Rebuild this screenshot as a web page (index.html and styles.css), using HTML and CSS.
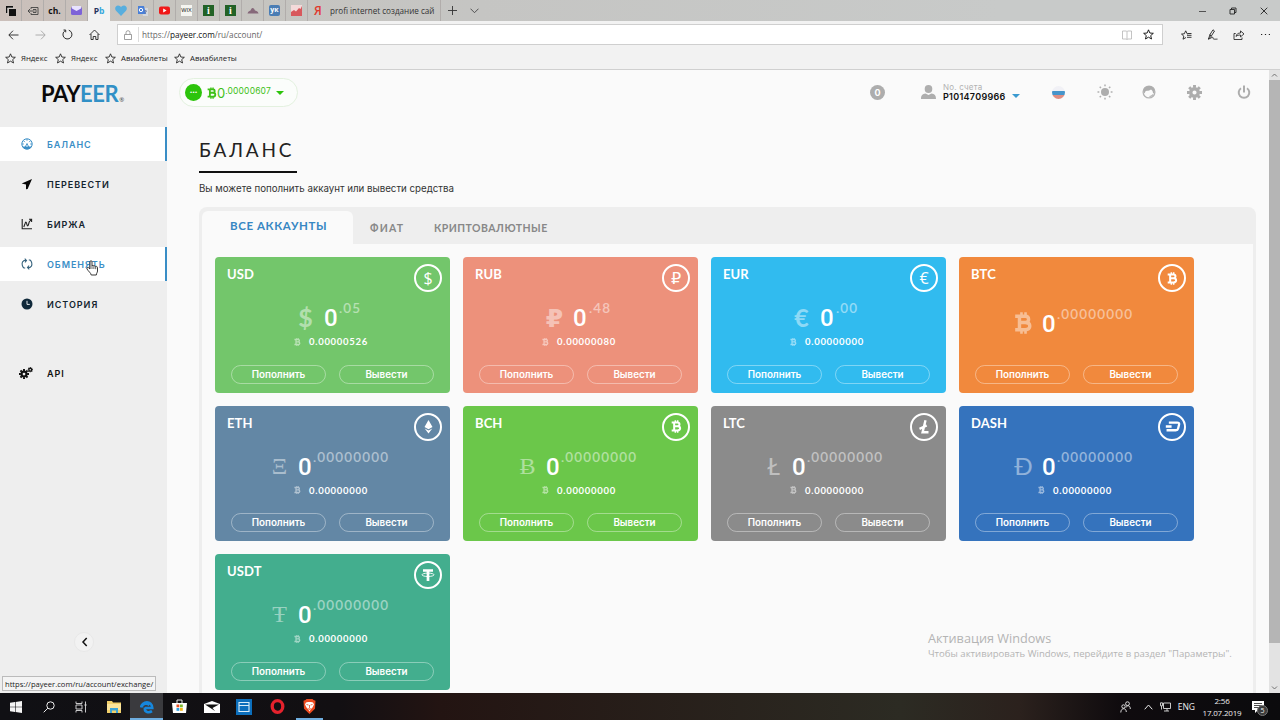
FILE: index.html
```html
<!DOCTYPE html>
<html lang="ru">
<head>
<meta charset="utf-8">
<title>Payeer</title>
<link rel="stylesheet" href="styles.css">
</head>
<body>
<svg class="defs" width="0" height="0" aria-hidden="true">
  <symbol id="star" viewBox="0 0 12 12"><path d="M6 .9l1.500 3.500 3.800.3-2.900 2.500.9 3.700L6 8.900l-3.300 2 .9-3.700L.7 4.700l3.800-.3z" fill="none" stroke="currentColor" stroke-width=".95"/></symbol>
  <symbol id="btc" viewBox="0 0 16 18"><path d="M1 3.300h8.400c2 0 2.900 1 2.900 2.500S11.300 8.600 9.400 8.600H5M9.400 8.600c2.500 0 3.900 1.100 3.900 3s-1.400 3.100-3.900 3.100H1M4.600 3v12" fill="none" stroke="currentColor" stroke-width="2.900"/><path d="M6.300 0v3M9.700 0v3M6.300 15v3M9.700 15v3" stroke="currentColor" stroke-width="2.200"/></symbol>
  <symbol id="gear" viewBox="0 0 16 16"><circle cx="8" cy="8" r="4" fill="none" stroke="currentColor" stroke-width="3.600"/><path d="M8 0v3M8 13v3M0 8h3M13 8h3M2.340 2.340l2.100 2.100M11.500 11.500l2.160 2.160M2.340 13.660l2.100-2.100M11.500 4.500l2.160-2.160" stroke="currentColor" stroke-width="3.100"/></symbol>
</svg>

<div class="screen">
  <div class="tabstrip">
    <div class="tab"><svg width="12" height="12" viewBox="0 0 12 12"><path d="M1 1h7v2H3v5H1z" fill="#111"/><path d="M4 4h7v7H4z" fill="#111"/><path d="M2.500 8.500V3h6" stroke="#ddd" fill="none" stroke-width=".7"/></svg></div>
    <div class="tab"><svg width="12" height="12" viewBox="0 0 12 12"><path d="M4 4V2.500h7v7H4V8M7.500 6H1M3 4L1 6l2 2M6 4.500h3v3H6" fill="none" stroke="#444" stroke-width=".9"/></svg></div>
    <div class="tab tab-ch">ch.</div>
    <div class="tab"><svg width="11" height="9" viewBox="0 0 11 9"><rect y="1" width="11" height="8" rx="1.500" fill="#7d63d8"/><path d="M1 0h9v2.500L5.500 5 1 2.500z" fill="#e8e2ff"/></svg></div>
    <div class="tab tab-active"><b class="pb-p">P</b><b class="pb-b">b</b></div>
    <div class="tab"><svg width="12" height="11" viewBox="0 0 12 11"><path d="M6 11L1 5.800C-.8 3.500.6.500 3 .5 4.500.5 5.500 1.300 6 2.300 6.500 1.300 7.500.5 9 .5c2.400 0 3.800 3 2 5.300z" fill="#58aede"/></svg></div>
    <div class="tab"><svg width="12" height="12" viewBox="0 0 12 12"><path d="M4 3h7v8H6z" fill="#d5d8dd"/><path d="M1 1h6l2 8H1z" fill="#4a80d8"/><circle cx="4" cy="5" r="1.700" fill="none" stroke="#fff"/><path d="M7 6h3M8.500 5v1M7.500 9l2-3" stroke="#6779a3" stroke-width=".7"/></svg></div>
    <div class="tab"><svg width="11" height="9" viewBox="0 0 11 9"><rect y=".5" width="11" height="8" rx="2" fill="#f01818"/><path d="M4.200 2.400v4.200L7.600 4.500z" fill="#fff"/></svg></div>
    <div class="tab"><span class="fav-wix">WIX</span></div>
    <div class="tab"><span class="fav-i">i</span></div>
    <div class="tab"><span class="fav-i">i</span></div>
    <div class="tab"><svg width="12" height="8" viewBox="0 0 12 8"><path d="M.5 6.500C1 4 3 4 3.500 3.500 4 2 5 .5 6 1s1.500 1.500 2 2.500c1 .5 3 .5 3.500 3z" fill="#86697a"/></svg></div>
    <div class="tab"><span class="fav-vk">ук</span></div>
    <div class="tab"><svg width="11" height="11" viewBox="0 0 11 11"><rect width="11" height="11" fill="#f3dada"/><path d="M0 7l3-2 2 1.500L8 3l1.500 1L11 1v10H0z" fill="#d8585c"/></svg></div>
    <div class="tab tab-wide"><span class="fav-ya">Я</span><span class="tab-title">profi internet создание сай</span></div>
    <svg class="tab-plus" width="9" height="9" viewBox="0 0 9 9"><path d="M4.500 0v9M0 4.500h9" stroke="#333" stroke-width=".9"/></svg>
    <svg class="tab-chev" width="9" height="6" viewBox="0 0 9 6"><path d="M.5.700l4 4 4-4" fill="none" stroke="#444" stroke-width=".9"/></svg>
    <div class="winbtns">
      <svg width="7" height="8" viewBox="0 0 7 8"><path d="M0 4.500h7" stroke="#333" stroke-width=".8"/></svg>
      <svg width="8" height="8" viewBox="0 0 8 8"><path d="M1 2.500h4.500V7H1zM2.500 2.500V1H7v4.500H5.500" fill="none" stroke="#222" stroke-width=".9"/></svg>
      <svg width="8" height="8" viewBox="0 0 8 8"><path d="M.7.700l6.600 6.600M7.300.700L.7 7.300" stroke="#222" stroke-width=".9"/></svg>
    </div>
  </div>

  <div class="toolbar">
    <div class="navbtns">
      <svg width="11" height="10" viewBox="0 0 11 10"><path d="M10.500 5H1M5 .7L.8 5 5 9.300" fill="none" stroke="#222" stroke-width=".9"/></svg>
      <svg width="11" height="10" viewBox="0 0 11 10"><path d="M.5 5H10M6 .7L10.200 5 6 9.300" fill="none" stroke="#a5a5a5" stroke-width=".9"/></svg>
      <svg width="11" height="11" viewBox="0 0 11 11"><path d="M3 1.700A4.500 4.500 0 1 0 6.800 1.200M1.500 1h2.200v2.300" fill="none" stroke="#222" stroke-width=".95"/></svg>
      <svg width="11" height="11" viewBox="0 0 11 11"><path d="M.5 6l5-5 5 5M2 5v5.500h2.200V7.500h2.600v3H9V5" fill="none" stroke="#222" stroke-width=".9"/></svg>
    </div>
    <div class="address">
      <svg class="lock" width="8" height="10" viewBox="0 0 8 10"><path d="M.5 4.500h7v5h-7zM2 4.500V2.700a2 2 0 0 1 4 0v1.800" fill="none" stroke="#888" stroke-width=".8"/></svg>
      <span class="url">https://<b>payeer.com</b>/ru/account/</span>
      <svg class="book" width="10" height="10" viewBox="0 0 10 10"><path d="M.5 1h4L5 1.500l.5-.5h4v8h-4L5 9.500 4.500 9h-4zM5 1.500v8" fill="none" stroke="#aaa" stroke-width=".7"/></svg>
      <svg class="addr-star" width="11" height="11"><use href="#star"/></svg>
    </div>
    <div class="tools">
      <svg width="11" height="10" viewBox="0 0 11 10"><path d="M7 4L6.200 3.800 4.700.8 3.300 3.800.5 4.100l2.300 2-.8 3.100 3-1.700M6 5.300h4.500M6.700 3.500h3.800M6 7.300h4.500" fill="none" stroke="#222" stroke-width=".9"/></svg>
      <svg width="11" height="11" viewBox="0 0 11 11"><path d="M1.500 10L3 5.500 6 .8 7.500 2 4 7.500zM3 5.500L4 7.500M1 10.300c3-1 5-3 5-1.500s1 1.500 4.500 1.300" fill="none" stroke="#222" stroke-width=".9"/></svg>
      <svg width="12" height="10" viewBox="0 0 12 10"><path d="M2.700 3.500H1v6h8V7.500M3 6.500c.5-2.500 2-3.500 4.500-3.500V.9l3.500 3-3.500 3V5C5.500 5 4 5.300 3 6.500z" fill="none" stroke="#222" stroke-width=".85"/></svg>
      <svg width="11" height="3" viewBox="0 0 11 3"><path d="M1 1.500h1.200M4.900 1.500h1.200M8.800 1.500H10" stroke="#222" stroke-width="1.200"/></svg>
    </div>
  </div>

  <div class="favbar">
    <span class="fav"><svg width="11" height="11"><use href="#star"/></svg>Яндекс</span>
    <span class="fav"><svg width="11" height="11"><use href="#star"/></svg>Яндекс</span>
    <span class="fav fav-long"><svg width="11" height="11"><use href="#star"/></svg>Авиабилеты</span>
    <span class="fav"><svg width="11" height="11"><use href="#star"/></svg>Авиабилеты</span>
  </div>

  <div class="page">
    <aside class="sidebar">
      <div class="logo"><span>PAY</span><span class="logo-blue">EER</span><i>®</i></div>
      <nav class="menu">
        <a class="item on"><svg width="12" height="12" viewBox="0 0 12 12"><circle cx="6" cy="6" r="5.200" fill="none" stroke="currentColor" stroke-width="1"/><path d="M1.300 8.500h9.400C9.500 12 2.500 12 1.300 8.500z" fill="currentColor"/><path d="M6 1v1.700M1 6h1.800M9.200 6H11M2.500 2.700l1.300 1.400M9.500 2.700L8.200 4.100M4.300 9L6 5.500 7.700 9" stroke="currentColor" fill="none" stroke-width=".9"/></svg>БАЛАНС</a>
        <a class="item"><svg width="12" height="12" viewBox="0 0 12 12"><path d="M11 1L.7 5.500 5 6.500v4.700L6.600 11z" fill="#050505"/></svg>ПЕРЕВЕСТИ</a>
        <a class="item"><svg width="12" height="12" viewBox="0 0 12 12"><path d="M1.200 1v9.800H11M2.800 9l1.400-3.800c.3-1.500 1-1.500 1.300 0l.6 2c.3 1 .9 1 1.200 0L8.200 4l2-2.500M8 1.300h2.600V4" fill="none" stroke="#222" stroke-width="1.100"/></svg>БИРЖА</a>
        <a class="item on hover"><svg width="12" height="12" viewBox="0 0 12 12"><path d="M4.200 10H3C1.200 8.800.6 5.500 1.600 3.800L3 2.500h2.200M3.700.7L5.500 2.500 3.900 4.300M7.800 2H9c1.800 1.200 2.400 4.500 1.400 6.200L9 9.500H6.800M8.300 11.300L6.500 9.500l1.600-1.800" fill="none" stroke="#35627d" stroke-width="1.100"/></svg>ОБМЕНЯТЬ</a>
        <a class="item"><svg width="12" height="12" viewBox="0 0 12 12"><circle cx="6" cy="6" r="5.500" fill="#10293a"/><path d="M6 2.800V6.400h2.800" stroke="#dfe5e8" stroke-width="1" fill="none"/></svg>ИСТОРИЯ</a>
        <a class="item api"><svg width="14" height="12" viewBox="0 0 14 12"><svg x="0" y="2" width="10" height="10" viewBox="0 0 16 16"><use href="#gear"/></svg><svg x="8.500" y="0" width="5.500" height="5.500" viewBox="0 0 16 16"><use href="#gear"/></svg></svg>API</a>
      </nav>
      <div class="collapse"><svg width="7" height="10" viewBox="0 0 7 10"><path d="M5.700 1L2 5l3.700 4" fill="none" stroke="#111" stroke-width="1.500"/></svg></div>
    </aside>

    <main class="main">
      <header class="top">
        <div class="pill"><span class="dots">···</span><svg class="pill-btc" width="10" height="12"><use href="#btc"/></svg><span class="pill-zero">0</span><span class="pill-dec">.00000607</span><i class="tri tri-green"></i></div>
        <div class="count">0</div>
        <div class="account">
          <svg width="15" height="14" viewBox="0 0 15 14"><ellipse cx="7.500" cy="4" rx="3.800" ry="4" fill="#aeaeae"/><path d="M0 14c0-4 1.500-5 4.500-5.500L7.500 10l3-1.500C13.500 9 15 10 15 14z" fill="#aeaeae"/></svg>
          <div class="acc-text"><span class="acc-label">No. счета</span><span class="acc-num">P1014709966</span></div>
          <i class="tri tri-blue"></i>
        </div>
        <div class="flag"></div>
        <svg class="ic-sun" width="16" height="16" viewBox="0 0 16 16"><circle cx="8" cy="8" r="4" fill="#adadad"/><path d="M8 .5v1.800M8 13.700v1.800M.5 8h1.800M13.700 8h1.800M2.700 2.700L4 4M12 12l1.300 1.300M2.700 13.300L4 12M12 4l1.300-1.300" stroke="#b0b0b0" stroke-width="1.500"/></svg>
        <svg class="ic-sup" width="14" height="14" viewBox="0 0 14 14"><circle cx="7" cy="7" r="5.900" fill="none" stroke="#b4b4b4" stroke-width="1.300"/><path d="M1.500 7C1.500 3 4 1 7 1s5.500 2 5.500 5.500v2L11 8.300C11 6.500 10.300 5.500 9 4.500 7.500 6 5 5.500 3.500 6.200L2.500 8.500z" fill="#adadad"/><path d="M11 9.500c-.8 1.500-2 2-3.500 2" stroke="#adadad" fill="none" stroke-width="1.200"/></svg>
        <svg class="ic-gear" width="15" height="15"><use href="#gear"/></svg>
        <svg class="ic-power" width="14" height="15" viewBox="0 0 14 15"><path d="M4 3.200a5.300 5.300 0 1 0 6 0M7 .5v7" fill="none" stroke="#adadad" stroke-width="2"/></svg>
      </header>

      <h1 class="title">БАЛАНС</h1>
      <p class="lead">Вы можете пополнить аккаунт или вывести средства</p>

      <section class="panel">
        <div class="ptabs">
          <span class="ptab ptab-on">ВСЕ АККАУНТЫ</span>
          <span class="ptab ptab-fiat">ФИАТ</span>
          <span class="ptab ptab-crypto">КРИПТОВАЛЮТНЫЕ</span>
        </div>
        <div class="cards">
          <article class="card usd">
            <div class="head"><h2>USD</h2><span class="badge">$</span></div>
            <div class="amount short"><span class="sign bold">$</span><span class="int">0</span><span class="dec">.05</span></div>
            <div class="sub"><svg width="7" height="8"><use href="#btc"/></svg>0.00000526</div>
            <div class="btns"><a>Пополнить</a><a>Вывести</a></div>
          </article>
          <article class="card rub">
            <div class="head"><h2>RUB</h2><span class="badge">₽</span></div>
            <div class="amount short"><span class="sign bold">₽</span><span class="int">0</span><span class="dec">.48</span></div>
            <div class="sub"><svg width="7" height="8"><use href="#btc"/></svg>0.00000080</div>
            <div class="btns"><a>Пополнить</a><a>Вывести</a></div>
          </article>
          <article class="card eur">
            <div class="head"><h2>EUR</h2><span class="badge">€</span></div>
            <div class="amount short"><span class="sign bold">€</span><span class="int">0</span><span class="dec">.00</span></div>
            <div class="sub"><svg width="7" height="8"><use href="#btc"/></svg>0.00000000</div>
            <div class="btns"><a>Пополнить</a><a>Вывести</a></div>
          </article>
          <article class="card btc">
            <div class="head"><h2>BTC</h2><span class="badge"><svg width="11" height="13"><use href="#btc"/></svg></span></div>
            <div class="amount low"><span class="sign"><svg width="19" height="22"><use href="#btc"/></svg></span><span class="int">0</span><span class="dec">.00000000</span></div>
            <div class="btns"><a>Пополнить</a><a>Вывести</a></div>
          </article>
          <article class="card eth">
            <div class="head"><h2>ETH</h2><span class="badge"><svg width="9" height="14" viewBox="0 0 9 14"><path d="M4.500 0l4 7-4 2.300L.5 7zM.7 8.400l3.800 2.200 3.800-2.200-3.800 5.200z" fill="#fff"/></svg></span></div>
            <div class="amount"><span class="sign serif">Ξ</span><span class="int">0</span><span class="dec">.00000000</span></div>
            <div class="sub"><svg width="7" height="8"><use href="#btc"/></svg>0.00000000</div>
            <div class="btns"><a>Пополнить</a><a>Вывести</a></div>
          </article>
          <article class="card bch">
            <div class="head"><h2>BCH</h2><span class="badge"><svg width="11" height="13"><use href="#btc"/></svg></span></div>
            <div class="amount"><span class="sign serif">Ƀ</span><span class="int">0</span><span class="dec">.00000000</span></div>
            <div class="sub"><svg width="7" height="8"><use href="#btc"/></svg>0.00000000</div>
            <div class="btns"><a>Пополнить</a><a>Вывести</a></div>
          </article>
          <article class="card ltc">
            <div class="head"><h2>LTC</h2><span class="badge"><svg width="12" height="14" viewBox="0 0 12 14"><path d="M7.500.3L4.600 12.300H10.500M1.500 8.800l7.200-3.300" fill="none" stroke="#fff" stroke-width="2.400"/></svg></span></div>
            <div class="amount"><span class="sign">Ł</span><span class="int">0</span><span class="dec">.00000000</span></div>
            <div class="sub"><svg width="7" height="8"><use href="#btc"/></svg>0.00000000</div>
            <div class="btns"><a>Пополнить</a><a>Вывести</a></div>
          </article>
          <article class="card dash">
            <div class="head"><h2>DASH</h2><span class="badge"><svg width="17" height="11" viewBox="0 0 18 12"><path d="M5 1.700h9c1.800 0 2.600.6 2.200 2.200l-1.100 4.300c-.3 1.300-1 1.900-2.500 1.900H2.500M1.700 6H8" fill="none" stroke="#fff" stroke-width="2.500"/></svg></span></div>
            <div class="amount"><span class="sign">Đ</span><span class="int">0</span><span class="dec">.00000000</span></div>
            <div class="sub"><svg width="7" height="8"><use href="#btc"/></svg>0.00000000</div>
            <div class="btns"><a>Пополнить</a><a>Вывести</a></div>
          </article>
          <article class="card usdt">
            <div class="head"><h2>USDT</h2><span class="badge"><svg width="14" height="12" viewBox="0 0 14 12"><path d="M2 1.500h10M7 1.500V12" stroke="#fff" stroke-width="2.700"/><ellipse cx="7" cy="5.800" rx="6" ry="1.700" fill="none" stroke="#fff" stroke-width=".9"/></svg></span></div>
            <div class="amount"><span class="sign serif">Ŧ</span><span class="int">0</span><span class="dec">.00000000</span></div>
            <div class="sub"><svg width="7" height="8"><use href="#btc"/></svg>0.00000000</div>
            <div class="btns"><a>Пополнить</a><a>Вывести</a></div>
          </article>
        </div>
      </section>
    </main>

    <div class="scrollbar">
      <svg width="7" height="10" viewBox="0 0 7 10"><path d="M1 6.500L3.500 4 6 6.500" fill="none" stroke="#666" stroke-width=".9"/></svg>
      <div class="thumb"></div>
      <svg width="7" height="10" viewBox="0 0 7 10"><path d="M1 3.500L3.500 6 6 3.500" fill="none" stroke="#666" stroke-width=".9"/></svg>
    </div>
  </div>

  <div class="taskbar">
    <div class="apps">
      <span><svg width="12" height="12" viewBox="0 0 12 12"><path d="M0 1.700L5 1v4.700H0zM5.600.9L12 0v5.700H5.600zM0 6.300h5V11l-5-.7zM5.600 6.300H12V12l-6.400-.9z" fill="#f5f5f5"/></svg></span>
      <span><svg width="12" height="12" viewBox="0 0 12 12"><circle cx="7.500" cy="4.500" r="3.700" fill="none" stroke="#eee"/><path d="M4.800 7.200L.7 11.300" stroke="#eee"/></svg></span>
      <span><svg width="12" height="12" viewBox="0 0 12 12"><path d="M1 .5v2h6v-2M1 11.500v-2h6v2M1 4h6v4H1zM10.500.5v11M9.300 4h2.400" fill="none" stroke="#ddd" stroke-width=".9"/></svg></span>
      <span><svg width="14" height="12" viewBox="0 0 14 12"><path d="M0 0h5l1 1.500h8V12H0z" fill="#f1cf6a"/><path d="M0 3h14v6H0z" fill="#fbe49a"/><path d="M3 7h8v5H9V9.500H5V12H3z" fill="#3da5d8"/></svg></span>
      <span class="running current"><svg width="14" height="14" viewBox="0 0 14 14"><path d="M1 7.500C2 1 12 .2 12.300 8H5M1.500 7C3 3.500 7 2.500 9.500 5M5 7.500c-1 5 4 5.500 7 3.700" fill="none" stroke="#1687dd" stroke-width="2.600"/></svg></span>
      <span><svg width="15" height="15" viewBox="0 0 15 15"><path d="M5 4.500V1h5v3.500" fill="none" stroke="#eee"/><path d="M0 4h15l-1 10H1z" fill="#fff"/><path d="M4.500 5.500h2.800v2.800H4.500z" fill="#e85025"/><path d="M8 5.500h2.800v2.800H8z" fill="#7cb82f"/><path d="M4.500 9h2.800v2.800H4.500z" fill="#2b9fe0"/><path d="M8 9h2.800v2.800H8z" fill="#f4b619"/></svg></span>
      <span><svg width="16" height="12" viewBox="0 0 16 12"><path d="M0 3l8-3 8 3v9H0z" fill="#fff"/><path d="M1 3.500h14L8.500 7 11 10z" fill="#111"/></svg></span>
      <span><svg width="16" height="16" viewBox="0 0 16 16"><path d="M0 0h16v16H0z" fill="#0c6fbc"/><path d="M3 3.500h10v9H3zM3 6.500h10" fill="none" stroke="#d9edf8" stroke-width="1.100"/></svg></span>
      <span><svg width="15" height="15" viewBox="0 0 15 15"><ellipse cx="7.500" cy="7.500" rx="5.300" ry="5.800" fill="none" stroke="#e5222d" stroke-width="3.300"/></svg></span>
      <span class="running brave"><svg width="13" height="15" viewBox="0 0 13 15"><path d="M2.500 1l1-1h6l1 1 2 .8-.5 8L6.500 15 1 9.800l-.5-8z" fill="#ed4b20"/><path d="M3 3.500l2-.5h3l2 .5 1 2-1.500 3L8 10l-1.500 2.500L5 10 3.500 8.500 2 5.500z" fill="#fff"/><path d="M3.500 5.500L5.500 6M9.500 5.500L7.500 6M6.500 6v3.500M5 9.500l1.500 1 1.500-1" stroke="#ed4b20" stroke-width=".8" fill="none"/></svg></span>
    </div>
    <div class="tray">
      <svg class="people" width="11" height="12" viewBox="0 0 11 12"><circle cx="3.500" cy="5.500" r="1.700" fill="none" stroke="#eee" stroke-width=".9"/><circle cx="7.500" cy="2.700" r="1.900" fill="none" stroke="#eee" stroke-width=".9"/><path d="M.8 11.500c0-5 5.500-5 5.500-.5M6 6.500c1-2.500 4.300-2.500 4.300 1.500" fill="none" stroke="#eee" stroke-width=".9"/></svg>
      <svg class="up" width="9" height="6" viewBox="0 0 9 6"><path d="M.7 5.300L4.500 1l3.800 4.300" fill="none" stroke="#eee"/></svg>
      <svg class="net" width="11" height="10" viewBox="0 0 11 10"><path d="M3.500 1h7v5.500h-7zM4 9h5M7 6.500V9M.5.800h2v3h-2zM1.500 4v3.500" fill="none" stroke="#ddd" stroke-width=".9"/></svg>
      <span class="lang">ENG</span>
      <span class="clock">2:56<br>17.07.2019</span>
      <span class="notes"><svg width="12" height="12" viewBox="0 0 12 12"><path d="M0 0h12v9H6l-3 3V9H0z" fill="#fff"/><path d="M2 2.500h8M2 4.500h8M2 6.500h8" stroke="#222" stroke-width=".8"/></svg><i class="num">5</i></span>
    </div>
  </div>

  <div class="watermark"><b>Активация Windows</b><span>Чтобы активировать Windows, перейдите в раздел "Параметры".</span></div>
  <div class="status">https://payeer.com/ru/account/exchange/</div>
  <svg class="cursor" width="13" height="16" viewBox="0 0 13 16"><path d="M4 9V1.800c0-1.500 2-1.500 2 0V6c.3-1 1.800-.8 1.900.3.400-.8 1.700-.6 1.800.5.500-.7 1.800-.4 1.800.8V11c0 1.500-1 2-1.200 4H5.200C5 13 2.500 11.500 1 9c-.7-1.400 1-2 1.700-1.200z" fill="#fff" stroke="#222" stroke-width=".9"/><path d="M6 6v3M7.900 6.500V9M9.700 7v2.200" stroke="#222" stroke-width=".7"/></svg>
</div>
</body>
</html>
```
FILE: styles.css
```css
* { box-sizing: border-box; }
body { margin: 0; background: #fafafa; font-family: "Open Sans", "Noto Sans", sans-serif; }
svg { display: block; flex: none; }
.defs { position: absolute; }
.screen { position: relative; width: 1280px; height: 720px; overflow: hidden; display: flex; flex-direction: column; white-space: nowrap; }

.tabstrip { height: 21px; flex: none; display: flex; align-items: center; background: linear-gradient(90deg, #cbbfba 0, #c6c4bf 160px, #c5c5c3 480px, #c8cac9 1000px); }
.tab { width: 22px; height: 21px; flex: none; display: flex; align-items: center; justify-content: center; border-right: 1px solid #b1adab; font-size: 8.500px; }
.tab-ch { font-weight: 700; color: #111; }
.tab-active { background: #f2f2f2; border: 0; }
.pb-p { color: #26335c; }
.pb-b { color: #35a7dc; }
.fav-wix { width: 11px; height: 11px; background: #f5f5f0; color: #222; font: 5.500px/11px "Liberation Sans", sans-serif; text-align: center; }
.fav-i { width: 11px; height: 11px; background: #226226; color: #fff; font: bold 10px/11px "Liberation Serif", serif; text-align: center; }
.fav-vk { width: 11px; height: 11px; border-radius: 2px; background: #4a7db4; color: #fff; font: bold 7px/10px "Open Sans", sans-serif; text-align: center; }
.tab-wide { width: 133px; justify-content: flex-start; padding-left: 6px; }
.fav-ya { color: #e0392e; font: 600 12px "Open Sans", sans-serif; width: 16px; }
.tab-title { color: #333; font-size: 8.100px; padding-bottom: 1px; }
.tab-plus { margin-left: 7px; }
.tab-chev { margin-left: 13px; }
.winbtns { margin-left: auto; padding-right: 12px; display: flex; gap: 23px; }

.toolbar { height: 28px; flex: none; display: flex; align-items: center; padding-bottom: 1px; background: #f2f2f2; }
.navbtns { width: 117px; padding-left: 8px; display: flex; align-items: center; gap: 16px; }
.address { width: 1046px; height: 21px; background: #fff; border: 1px solid #cfcfcf; display: flex; align-items: center; }
.lock { margin-left: 6px; }
.url { margin-left: 6px; padding-left: 3px; height: 15px; border-left: 1px solid #ddd; color: #666; font: 8.200px/15px "Open Sans", sans-serif; }
.url b { font-weight: 400; color: #111; }
.book { margin-left: auto; }
.addr-star { margin: 0 8px 0 11px; }
.tools { margin-left: 18px; display: flex; align-items: center; gap: 15px; }

.favbar { height: 21px; flex: none; display: flex; align-items: center; padding: 0 0 2px 5px; gap: 9px; background: #f2f2f2; border-bottom: 1px solid #d0d0d0; font-size: 7.800px; color: #222; }
.fav { display: flex; align-items: center; gap: 5px; width: 41px; }
.fav-long { width: 60px; }

.page { flex: 1; min-height: 0; display: flex; background: #fafafa; overflow: hidden; }
.sidebar { width: 167px; flex: none; background: #eee; display: flex; flex-direction: column; }
.logo { height: 57px; flex: none; padding: 10px 0 0 41px; font: 700 22px/27px Lato, sans-serif; letter-spacing: -.45px; color: #0a0a0a; display: flex; }
.logo-blue { color: #3190c6; }
.logo i { font: 6px/8px "Open Sans", sans-serif; margin-top: 16px; padding-left: 1px; color: #444; }
.menu { display: flex; flex-direction: column; gap: 6px; }
.item { height: 34px; flex: none; display: flex; align-items: center; padding-left: 21px; color: #14242e; font: 600 9px Inter, sans-serif; letter-spacing: .95px; border-right: 2px solid transparent; }
.item svg { margin-right: 14px; }
.on { background: #fff; color: #3a8ec6; border-color: #3a8ec6; }
.api { margin-top: 29px; padding-left: 19px; color: #111; }
.collapse { width: 20px; height: 20px; margin: auto 0 41px 74px; border-radius: 50%; background: #f2f2f2; border: 1px solid #e8e8e8; display: flex; align-items: center; justify-content: center; }

.main { flex: 1; min-width: 0; padding-left: 32px; }
.top { height: 45px; margin-left: -32px; display: flex; align-items: center; padding: 0 0 1px 12px; }
.pill { width: 119px; height: 29px; margin-top: 1px; border: 1px solid #e3f1df; border-radius: 15px; background: #fbfdfb; display: flex; align-items: center; padding-left: 5px; color: #3fc118; }
.dots { width: 17px; height: 17px; border-radius: 50%; background: #2cc40b; color: #fff; font: bold 9px/16px "Open Sans", sans-serif; text-align: center; }
.pill-btc { margin-left: 5px; }
.pill-zero { font: 13px Inter, sans-serif; }
.pill-dec { font: 8.500px Inter, sans-serif; letter-spacing: .15px; margin-bottom: 4px; }
.tri { border: 4px solid transparent; border-bottom: 0; border-top: 4px solid #3a9ad0; }
.tri-green { border-top-color: #2cc40b; margin-left: 5px; border-width: 4px 4.500px 0; }
.count { margin-left: 572px; width: 15px; height: 15px; border-radius: 50%; background: #adadad; color: #fff; font: bold 9px/15px Inter, sans-serif; text-align: center; }
.account { margin-left: 36px; width: 99px; display: flex; align-items: center; }
.acc-text { width: 64px; margin: 0 6px 0 7px; display: flex; flex-direction: column; color: #111; font: 600 9px/9px Inter, sans-serif; }
.acc-label { color: #b2b2b2; font-weight: 400; font-size: 8px; letter-spacing: .2px; }
.acc-num { letter-spacing: .3px; }
.tri-blue { margin-top: 8px; }
.flag { margin-left: 32px; width: 13px; height: 13px; border-radius: 50%; background: linear-gradient(#f1f1f6 0 36%, #4695cb 36% 68%, #df8e82 68%); }
.ic-sun { margin-left: 32px; }
.ic-sup { margin-left: 29px; }
.ic-gear { margin-left: 31px; color: #adadad; }
.ic-power { margin-left: 35px; }

.title { width: 98px; height: 58px; margin: 0; padding-top: 20px; border-bottom: 2px solid #111; font: 400 19px/29px Lato, sans-serif; letter-spacing: 2.800px; color: #222; }
.lead { margin: 8px 0 10px; font: 9.720px/16px Inter, sans-serif; color: #333; }
.panel { width: 1057px; height: 600px; border: solid #eee; border-width: 4px 3px 0; border-radius: 8px 8px 0 0; }
.ptabs { height: 33px; background: #eee; display: flex; align-items: center; font: 700 10.500px/30px Lato, sans-serif; letter-spacing: .450px; color: #888; }
.ptab-on { width: 151px; height: 33px; padding-left: 28px; border-radius: 6px 6px 0 0; background: #fafafa; color: #3787c3; font-size: 11.500px; letter-spacing: .6px; }
.ptab-fiat { padding-left: 17px; width: 81px; letter-spacing: 1.200px; }
.cards { padding: 13px 0 0 13px; display: grid; grid-template-columns: repeat(4, 235px); grid-auto-rows: 135.500px; gap: 13px; }

.card { border-radius: 4px; color: #fff; display: flex; flex-direction: column; }
.usd { background: #73c66b; }
.rub { background: #ed917b; }
.eur { background: #31bbef; }
.btc { background: #f1893d; }
.eth { background: #6387a5; }
.bch { background: #6bc74a; }
.ltc { background: #8b8b8b; }
.dash { background: #3573bd; }
.usdt { background: #43ae8e; }
.head { height: 42px; flex: none; padding: 7px 8px 0 12px; display: flex; justify-content: space-between; }
.head h2 { margin: 1px 0 0; font: 700 13px/18px Lato, sans-serif; letter-spacing: .1px; }
.badge { width: 28px; height: 28px; border: 2px solid #fff; border-radius: 50%; display: flex; align-items: center; justify-content: center; font: 16px/24px "Open Sans", "DejaVu Sans", sans-serif; }
.amount { height: 35px; flex: none; display: flex; padding-left: 54px; }
.short { padding-left: 80px; }
.rub .amount { padding-left: 81px; }
.ltc .amount { padding-left: 52px; }
.low { margin-top: 6px; margin-bottom: -6px; }
.sign { width: 21px; height: 26px; margin-top: 5px; display: flex; align-items: center; justify-content: center; font: 24px/26px Lato, "DejaVu Sans", sans-serif; opacity: .45; }
.bold { font: 700 25px/26px Lato, "DejaVu Sans", sans-serif; }
.serif { font: 24px/26px "Liberation Serif", "DejaVu Serif", serif; }
.int { width: 14px; margin: 5px 1px 0 8px; font: 500 24px/29px Roboto, sans-serif; }
.dec { margin-top: 1px; font: 600 13.500px/16px Lato, sans-serif; letter-spacing: 1.150px; opacity: .48; }
.rub .dec, .eur .dec { margin-left: 1px; }
.sub { height: 15px; flex: none; display: flex; align-items: center; padding-left: 79px; font: 700 9.500px/15px Lato, sans-serif; letter-spacing: .7px; }
.sub svg { margin-right: 8px; opacity: .5; }
.btns { margin: auto 0 9px 16px; display: flex; gap: 13px; }
.btns a { width: 95px; height: 19px; border: 1px solid rgba(255,255,255,.38); border-radius: 10px; text-align: center; font: 600 9.800px/18px Inter, sans-serif; }

.scrollbar { width: 11px; flex: none; display: flex; flex-direction: column; align-items: center; background: #e3e3e3; }
.thumb { width: 11px; height: 563px; background: #b5b5b5; margin-bottom: auto; }

.taskbar { height: 27px; flex: none; display: flex; justify-content: space-between; background: linear-gradient(90deg, #101014 0, #120f12 340px, #231412 440px, #2c2b23 900px, #2b211d 1020px, #0f0b0e 1120px, #0b0b0d 1280px); color: #eee; }
.apps { display: flex; }
.apps span { width: 32.600px; display: flex; align-items: center; justify-content: center; }
.current { background: #3a3a3e; }
.running { box-shadow: inset 0 -2px #6faee0; }
.apps .brave { width: 27px; margin-left: 3px; }
.tray { display: flex; align-items: center; font-size: 8.500px; line-height: 11.500px; }
.up { margin-left: 13px; }
.net { margin-left: 7px; }
.lang { margin-left: 7px; }
.clock { margin-left: 6px; width: 42px; text-align: center; font-size: 8px; letter-spacing: -.2px; }
.notes { position: relative; margin: 0 16px 0 9px; }
.num { position: absolute; left: 5px; top: 4px; width: 11px; height: 11px; border-radius: 50%; background: #3b3b3b; border: 1px solid #777; font: 7px/9px "Open Sans", sans-serif; text-align: center; }

.watermark { position: absolute; left: 928px; top: 630px; display: flex; flex-direction: column; color: #b4b4b4; font-size: 9.550px; line-height: 13px; }
.watermark b { font-weight: 400; font-size: 12.700px; line-height: 17px; }
.status { position: absolute; left: 2px; top: 676px; width: 154px; height: 15px; border: 1px solid #bbb; background: #f4f4f4; color: #222; font-size: 7.600px; line-height: 14px; padding-left: 2px; }
.cursor { position: absolute; left: 86px; top: 260px; }
```
